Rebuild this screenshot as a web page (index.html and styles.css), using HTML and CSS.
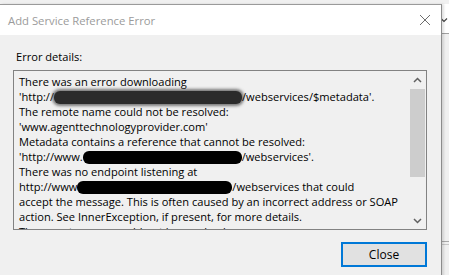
FILE: index.html
```html
<html>
<head>
    <title>Add Service Reference Error</title>
    <link rel="stylesheet" href="styles.css">
</head>
<body>
    <div class="desktop">
        <div class="backwin">
            <div class="back-top">
                <svg class="chev" width="8" height="6" viewBox="0 0 8 6"><path d="M1 1.5 L4 4.5 L7 1.5" fill="none" stroke="#444" stroke-width="1.2"/></svg>
            </div>
            <div class="back-body"></div>
        </div>

        <div class="dialog">
            <div class="titlebar">
                <span class="title">Add Service Reference Error</span>
                <svg class="close-x" width="12" height="12" viewBox="0 0 12 12"><path d="M1 1 L11 11 M11 1 L1 11" stroke="#6e6e6e" stroke-width="1"/></svg>
            </div>
            <div class="content">
                <div class="label">Error details:</div>
                <div class="textbox">
                    <div class="text">There was an error downloading
'http://<span class="blot blot-soft"></span>/webservices/$metadata'.
The remote name could not be resolved:
'www.agenttechnologyprovider.com'
Metadata contains a reference that cannot be resolved:
'http://www.<span class="blot blot-a"></span>/webservices'.
There was no endpoint listening at
http://www<span class="blot blot-b"></span>/webservices that could
accept the message. This is often caused by an incorrect address or SOAP
action. See InnerException, if present, for more details.
The remote name could not be resolved.</div>
                    <div class="scrollbar">
                        <div class="arrow">
                            <svg width="9" height="6" viewBox="0 0 9 6"><path d="M1 5 L4.5 1.5 L8 5" fill="none" stroke="#606060" stroke-width="1.5"/></svg>
                        </div>
                        <div class="track">
                            <div class="thumb"></div>
                        </div>
                        <div class="arrow">
                            <svg width="9" height="6" viewBox="0 0 9 6"><path d="M1 1 L4.5 4.5 L8 1" fill="none" stroke="#606060" stroke-width="1.5"/></svg>
                        </div>
                    </div>
                </div>
                <div class="buttons">
                    <button class="btn">Close</button>
                </div>
            </div>
            <div class="grip"></div>
        </div>
    </div>
</body>
</html>
```

FILE: styles.css
```css
*{
    margin: 0;
    box-sizing: border-box;
}
body{
    background-color: #f0f0f0;
    font-family: 'Open Sans', 'Noto Sans', sans-serif;
    font-size: 11.1px;
    overflow: hidden;
}
.desktop{
    position: relative;
    width: 449px;
    height: 275px;
}
.backwin{
    position: absolute;
    left: 400px;
    top: 0;
    width: 60px;
    height: 275px;
    display: flex;
    flex-direction: column;
}
.back-top{
    height: 34px;
    background-color: #ffffff;
    border-top: 4px solid #f0f0f0;
    border-bottom: 1px solid #a0a0a0;
    display: flex;
    align-items: center;
    justify-content: flex-end;
    padding-right: 12px;
}
.chev{
    margin-top: 2px;
}
.back-body{
    flex: 1;
    background-color: #f0f0f0;
    border-left: 1px solid #d9d9d9;
    background-image: linear-gradient(#a9a9a9, #a9a9a9), linear-gradient(#c8c8c8, #c8c8c8);
    background-size: 100% 1px, 100% 1px;
    background-position: 0 207px, 0 210px;
    background-repeat: no-repeat;
}
.dialog{
    position: absolute;
    left: 0;
    top: 4px;
    width: 442px;
    height: 280px;
    background-color: #f0f0f0;
    border-top: 1px solid #9a9a9a;
    border-right: 1px solid #8c8c8c;
    box-shadow: 2px 0 2px rgba(0,0,0,0.12);
    display: flex;
    flex-direction: column;
}
.titlebar{
    height: 30px;
    background-color: #ffffff;
    display: flex;
    align-items: center;
    justify-content: space-between;
    padding-left: 8px;
    padding-right: 10px;
}
.title{
    color: #9b9b9b;
    font-size: 11.3px;
}
.content{
    padding: 0 14px 0 13px;
    display: flex;
    flex-direction: column;
}
.label{
    height: 35px;
    padding-left: 3px;
    line-height: 15px;
    padding-top: 14px;
    color: #000;
}
.textbox{
    height: 160px;
    border: 1px solid #828282;
    display: flex;
    overflow: hidden;
}
.text{
    flex: 1;
    white-space: pre;
    overflow: hidden;
    padding: 3px 0 0 5px;
    line-height: 15px;
    color: #000;
}
.blot{
    display: inline-block;
    height: 13px;
    vertical-align: -3px;
    background-color: #000;
    border-radius: 6px;
}
.blot-soft{
    width: 188px;
    background-color: #2b2b2b;
    box-shadow: 0 0 3px 2px rgba(70,70,70,0.7);
}
.blot-a{
    width: 159px;
}
.blot-b{
    width: 155px;
}
.scrollbar{
    width: 17px;
    display: flex;
    flex-direction: column;
    background-color: #f0f0f0;
}
.arrow{
    height: 17px;
    display: flex;
    align-items: center;
    justify-content: center;
}
.track{
    flex: 1;
}
.thumb{
    height: 88px;
    background-color: #cdcdcd;
    margin: 1px 1px 0 1px;
}
.buttons{
    display: flex;
    justify-content: flex-end;
    padding-top: 12px;
}
.btn{
    width: 86px;
    height: 25px;
    border: 2px solid #0078d7;
    background-color: #e1e1e1;
    font-family: 'Open Sans', 'Noto Sans', sans-serif;
    font-size: 12px;
    color: #000;
    padding: 0;
}
.grip{
    position: absolute;
    right: 2px;
    bottom: 0px;
    width: 5px;
    height: 5px;
    background-image: radial-gradient(#b8b8b8 40%, transparent 45%);
    background-size: 2px 2px;
}
```
